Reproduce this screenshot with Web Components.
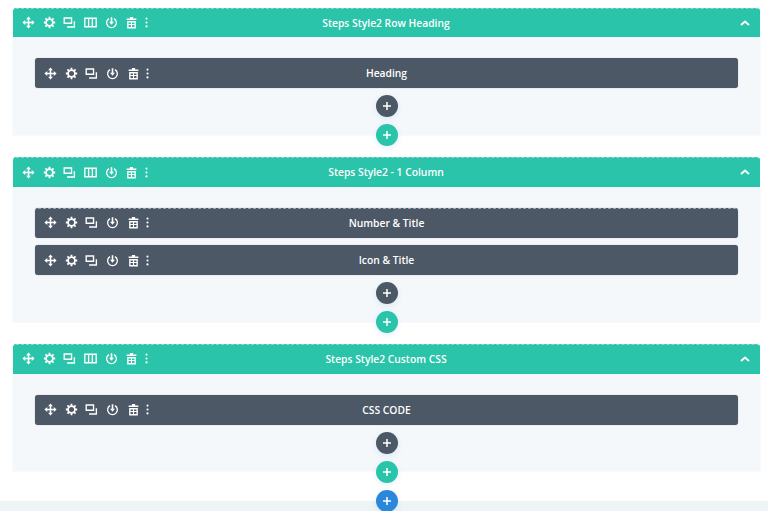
<!DOCTYPE html>
<html>
<head>
<meta charset="utf-8">
<style>
    html, body { margin: 0; height: 511px; overflow: hidden; background: #fff; }
    body { font-family: "Open Sans", "Liberation Sans", sans-serif; }
    main { display: flex; flex-direction: column; gap: 22px; padding: 7.8px 8px 0 13px; }
</style>
</head>
<body>
<main>
    <builder-row label="Steps Style2 Row Heading">
        <builder-module label="Heading"></builder-module>
    </builder-row>
    <builder-row label="Steps Style2 - 1 Column">
        <builder-module label="Number &amp; Title" dashed></builder-module>
        <builder-module label="Icon &amp; Title"></builder-module>
    </builder-row>
    <builder-row label="Steps Style2 Custom CSS">
        <builder-module label="CSS CODE"></builder-module>
    </builder-row>
</main>
<page-footer></page-footer>

<script>
const icons = {
    move: `<path d="M8 .5 11 4H9v3h3V5l3.500 3L12 11V9H9v3h2l-3 3.500L5 12h2V9H4v2L.5 8 4 5v2h3V4H5z" fill="#fff"/>`,
    gear: `<circle cx="8" cy="8" r="4.200" fill="none" stroke="#fff" stroke-width="2.200"/><path d="M8 1v2.500M8 12.500V15M1 8h2.500M12.500 8H15M3 3l1.800 1.800M11.200 11.200 13 13M13 3l-1.800 1.800M4.800 11.200 3 13" stroke="#fff" stroke-width="2.200"/>`,
    clone: `<path d="M1.500 2.500h9v6.500h-9z" fill="none" stroke="#fff" stroke-width="1.700"/><path d="M14 6.500v7H5" fill="none" stroke="#fff" stroke-width="1.700"/>`,
    columns: `<path d="M1 2.800h14v10.400H1z" fill="none" stroke="#fff" stroke-width="1.700"/><path d="M5.700 3v10M10.300 3v10" stroke="#fff" stroke-width="1.700"/>`,
    power: `<path d="M5 3.200a6 6 0 1 0 6 0" fill="none" stroke="#fff" stroke-width="1.600"/><path d="M8 1.500v6.500" stroke="#fff" stroke-width="2"/><path d="M5 7h6l-3 3.800z" fill="#fff"/>`,
    trash: `<path d="M2 3.200h12v1.800H2zM6 1.200h4v2.200H6z" fill="#fff"/><path d="M3.500 7h9v7.500h-9z" fill="none" stroke="#fff" stroke-width="1.700"/><path d="M3.500 10.500h9M8 7v7.500" stroke="#fff" stroke-width="1.400"/>`,
    dots: `<circle cx="8" cy="3.200" r="1.300" fill="#fff"/><circle cx="8" cy="8" r="1.300" fill="#fff"/><circle cx="8" cy="12.800" r="1.300" fill="#fff"/>`
};

class ToolIcons extends HTMLElement {
    connectedCallback() {
        const names = this.getAttribute("names").split(" ");
        const shadow = this.attachShadow({ mode: "open" });
        shadow.innerHTML = `
            <style>
                :host { display: flex; align-items: center; gap: 7.700px; }
                svg { display: block; width: 13px; height: 13px; }
                svg:last-child { margin-left: -6.500px; }
            </style>
            ${names.map(n => `<svg viewBox="0 0 16 16">${icons[n]}</svg>`).join("")}
        `;
    }
}
customElements.define("tool-icons", ToolIcons);

class AddButton extends HTMLElement {
    connectedCallback() {
        const shadow = this.attachShadow({ mode: "open" });
        shadow.innerHTML = `
            <style>
                :host {
                    display: flex;
                    align-items: center;
                    justify-content: center;
                    width: 22px;
                    height: 22px;
                    border-radius: 50%;
                    background: var(--add-color, #4c5866);
                    box-shadow: 0 2px 6px rgba(43, 135, 218, .12);
                }
                svg { display: block; width: 8px; height: 8px; }
            </style>
            <svg viewBox="0 0 8 8"><path d="M4 0v8M0 4h8" stroke="#fff" stroke-width="1.500"/></svg>
        `;
    }
}
customElements.define("add-button", AddButton);

class BuilderModule extends HTMLElement {
    connectedCallback() {
        const shadow = this.attachShadow({ mode: "open" });
        shadow.innerHTML = `
            <style>
                :host {
                    display: grid;
                    grid-template-columns: 1fr auto 1fr;
                    align-items: center;
                    height: 30px;
                    box-sizing: border-box;
                    padding: 0 9px;
                    background: #4c5866;
                    border-radius: 3px;
                    color: #fff;
                    font-size: 10.300px;
                    font-weight: 600;
                    box-shadow: 0 0 1px rgba(43, 55, 70, .5);
                }
                :host([dashed]) { border-top: 1px dashed #98a1ab; padding-bottom: 1px; }
            </style>
            <tool-icons names="move gear clone power trash dots"></tool-icons>
            <span>${this.getAttribute("label").replace(/&/g, "&amp;")}</span>
        `;
    }
}
customElements.define("builder-module", BuilderModule);

class BuilderRow extends HTMLElement {
    connectedCallback() {
        const shadow = this.attachShadow({ mode: "open" });
        shadow.innerHTML = `
            <style>
                :host { display: block; }
                header {
                    display: grid;
                    grid-template-columns: 1fr auto 1fr;
                    align-items: center;
                    height: 29.600px;
                    box-sizing: border-box;
                    padding: 0 10px 1px 9px;
                    background: #29c4a9;
                    border-top: 1px dashed #7fdccb;
                    border-radius: 3px 3px 0 0;
                    color: #fff;
                    font-size: 10.300px;
                    font-weight: 600;
                }
                header svg { justify-self: end; display: block; width: 10px; height: 6px; }
                .body {
                    display: flex;
                    flex-direction: column;
                    gap: 7.300px;
                    box-sizing: border-box;
                    padding: 21px 22px 0;
                    background: #f4f8fb;
                    box-shadow: 0 0 1px rgba(43, 135, 218, .2);
                }
                .add {
                    display: flex;
                    flex-direction: column;
                    align-items: center;
                    gap: 7px;
                    margin: -.3px 0 -11.200px;
                }
            </style>
            <header>
                <tool-icons names="move gear clone columns power trash dots"></tool-icons>
                <span>${this.getAttribute("label")}</span>
                <svg viewBox="0 0 10 6"><path d="M1 5 5 1.500 9 5" fill="none" stroke="#fff" stroke-width="2"/></svg>
            </header>
            <div class="body">
                <slot></slot>
                <div class="add">
                    <add-button></add-button>
                    <add-button style="--add-color: #29c4a9"></add-button>
                </div>
            </div>
        `;
    }
}
customElements.define("builder-row", BuilderRow);

class PageFooter extends HTMLElement {
    connectedCallback() {
        const shadow = this.attachShadow({ mode: "open" });
        shadow.innerHTML = `
            <style>
                :host {
                    display: flex;
                    justify-content: center;
                    height: 10px;
                    margin-top: 29.700px;
                    padding-left: 5px;
                    background: #eef3f6;
                }
                add-button { --add-color: #2b87da; margin-top: -11px; }
            </style>
            <add-button></add-button>
        `;
    }
}
customElements.define("page-footer", PageFooter);
</script>
</body>
</html>
